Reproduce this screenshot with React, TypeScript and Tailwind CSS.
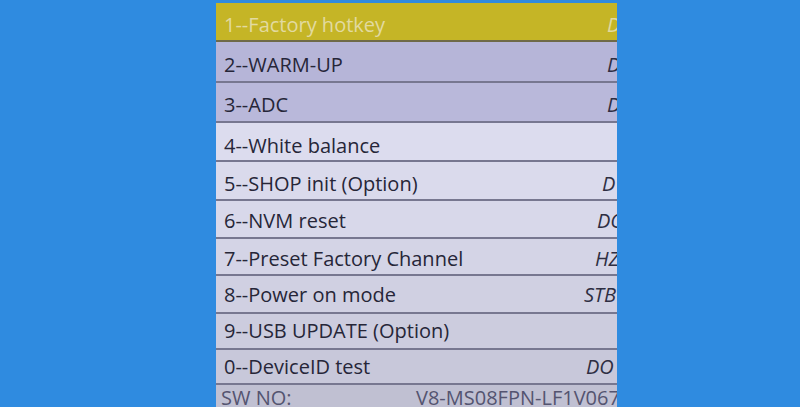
import React from "react";

type Row = { label: string; value?: string; h: string; bg: string; vx: string; pt: string };

const rows: Row[] = [
  { label: "2--WARM-UP", value: "D", h: "h-[41px]", bg: "bg-[#b6b5d8]", vx: "left-[383px]", pt: "pt-[6px]" },
  { label: "3--ADC", value: "D", h: "h-[40px]", bg: "bg-[#b9b8da]", vx: "left-[383px]", pt: "pt-[6px]" },
  { label: "4--White balance", h: "h-[39px]", bg: "bg-[#dcdcee]", vx: "left-[382px]", pt: "pt-[8px]" },
  { label: "5--SHOP init (Option)", value: "D", h: "h-[39px]", bg: "bg-[#dadaec]", vx: "left-[378px]", pt: "pt-[6px]" },
  { label: "6--NVM reset", value: "DO", h: "h-[38px]", bg: "bg-[#d8d8ea]", vx: "left-[373px]", pt: "pt-[3px]" },
  { label: "7--Preset Factory Channel", value: "HZ", h: "h-[37px]", bg: "bg-[#d4d4e6]", vx: "left-[371px]", pt: "pt-[4px]" },
  { label: "8--Power on mode", value: "STB", h: "h-[38px]", bg: "bg-[#d0d0e2]", vx: "left-[360px]", pt: "pt-[1px]" },
  { label: "9--USB UPDATE (Option)", h: "h-[36px]", bg: "bg-[#ccccde]", vx: "left-[362px]", pt: "pt-0" },
  { label: "0--DeviceID test", value: "DO", h: "h-[35px]", bg: "bg-[#c8c8da]", vx: "left-[362px]", pt: "pt-0" },
];

export default function App() {
  return (
    <div
      className="w-[800px] h-[407px] overflow-hidden bg-[#2f8be0] relative"
      style={{ fontFamily: "'Open Sans', Lato, sans-serif" }}
    >
      <div className="ml-[216px] mt-[3px] w-[401px] h-[404px] overflow-hidden flex flex-col">
        <div className="h-[39px] shrink-0 bg-[#c5b526] border-b-2 border-[#6f6a48] flex items-center pl-[8px] pt-[7px]">
          <div className="relative flex-1 leading-none">
            <span className="text-[20px] text-[#e2daa0] leading-none">1--Factory hotkey</span>
            <span className="absolute left-[383px] top-0 text-[20px] italic text-[#e2daa0] leading-none whitespace-nowrap">D</span>
          </div>
        </div>
        {rows.map((r) => (
          <div
            key={r.label}
            className={`${r.h} ${r.pt} shrink-0 ${r.bg} border-b-2 border-[#777790] flex items-center pl-[8px]`}
          >
            <div className="relative flex-1 leading-none">
              <span className="text-[20px] text-[#262638] leading-none whitespace-nowrap">{r.label}</span>
              {r.value && (
                <span className={`absolute ${r.vx} top-0 text-[20px] italic text-[#2e2e42] leading-none whitespace-nowrap`}>
                  {r.value}
                </span>
              )}
            </div>
          </div>
        ))}
        <div className="relative h-[30px] shrink-0 bg-[#c0c0d2] flex items-start pt-[3px] pl-[5px]">
          <span className="text-[20px] text-[#545470] leading-none">SW NO:</span>
          <span className="absolute left-[200px] top-[3px] text-[20px] text-[#545470] leading-none whitespace-nowrap">V8-MS08FPN-LF1V067</span>
        </div>
      </div>
    </div>
  );
}
